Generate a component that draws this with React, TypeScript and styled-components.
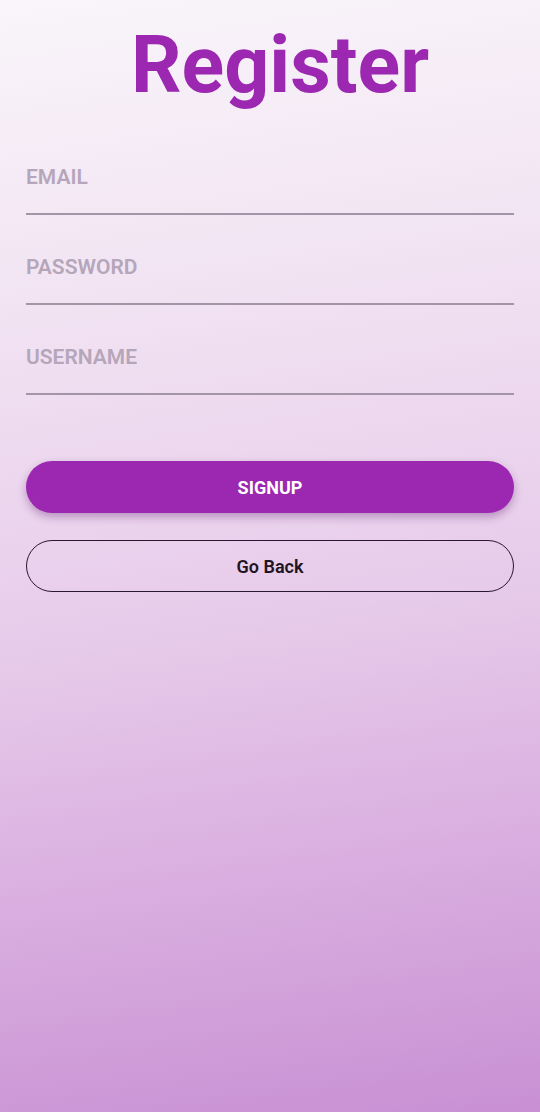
import React from 'react';
import styled, { createGlobalStyle } from 'styled-components';

const GlobalStyle = createGlobalStyle`
  html, body {
    margin: 0;
    padding: 0;
  }
  body {
    font-family: Roboto, "Liberation Sans", sans-serif;
  }
  * {
    box-sizing: border-box;
  }
`;

const Screen = styled.div`
  min-height: 1112px;
  width: 100%;
  padding: 26px 26px 0;
  background: linear-gradient(172deg, #f9f5fa 0%, #f2e4f3 25%, #e7cbea 55%, #d7aade 80%, #c890d3 100%);
  display: flex;
  flex-direction: column;
`;

const Title = styled.h1`
  margin: 0;
  padding-left: 20px;
  text-align: center;
  font-family: Roboto, "Liberation Sans", sans-serif;
  font-weight: 700;
  font-size: 79px;
  line-height: 79px;
  color: #9c27b0;
`;

const Form = styled.form`
  display: flex;
  flex-direction: column;
  gap: 30px;
  margin-top: 50px;
`;

const Input = styled.input`
  display: block;
  width: 100%;
  height: 60px;
  padding: 0 0 14px;
  border: none;
  border-bottom: 2px solid #a394a7;
  background: transparent;
  outline: none;
  font-family: Roboto, "Liberation Sans", sans-serif;
  font-weight: 600;
  font-size: 21px;
  color: #3a2a3e;

  &::placeholder {
    color: #b5a6ba;
    opacity: 1;
  }
`;

const Actions = styled.div`
  display: flex;
  flex-direction: column;
  gap: 27px;
  margin-top: 66px;
`;

const Button = styled.button<{ $outline?: boolean }>`
  width: 100%;
  height: 52px;
  border-radius: 26px;
  font-family: Roboto, "Liberation Sans", sans-serif;
  font-size: 18px;
  font-weight: ${(p) => (p.$outline ? 600 : 700)};
  cursor: pointer;
  background: ${(p) => (p.$outline ? 'transparent' : '#9c27b0')};
  color: ${(p) => (p.$outline ? '#1f1422' : '#ffffff')};
  border: ${(p) => (p.$outline ? '1.5px solid #2a1830' : 'none')};
  box-shadow: ${(p) => (p.$outline ? 'none' : '0 4px 9px rgba(90, 20, 110, 0.35)')};
`;

const App = () => {
  return (
    <>
      <GlobalStyle />
      <Screen>
        <Title>Register</Title>
        <Form onSubmit={(e) => e.preventDefault()}>
          <Input type="email" placeholder="EMAIL" />
          <Input type="password" placeholder="PASSWORD" />
          <Input type="text" placeholder="USERNAME" />
        </Form>
        <Actions>
          <Button type="button">SIGNUP</Button>
          <Button type="button" $outline>Go Back</Button>
        </Actions>
      </Screen>
    </>
  );
};

export default App;
